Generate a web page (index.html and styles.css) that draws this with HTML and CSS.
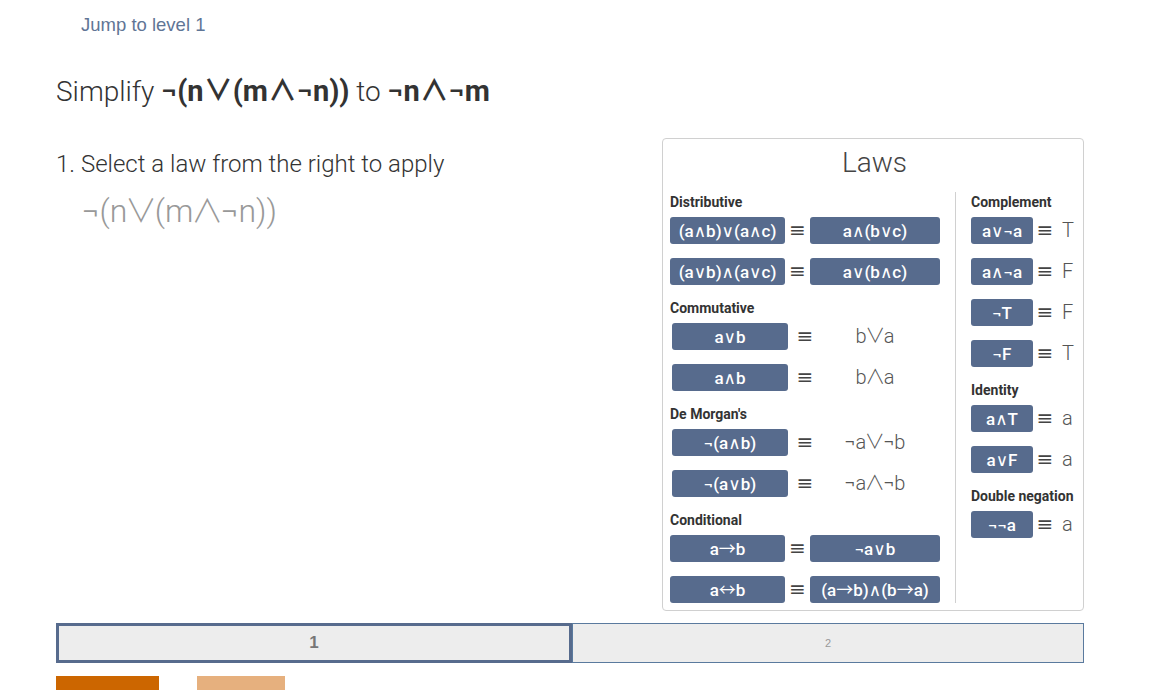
FILE: index.html
```html
<!DOCTYPE html>
<html lang="en">

<head>
    <meta charset="UTF-8">
    <meta name="viewport" content="width=device-width, initial-scale=1.0">
    <title>Simplify - Level 1</title>
    <link rel="stylesheet" href="styles.css">
</head>

<body>
    <div class="page">
        <div class="jump">Jump to level 1</div>

        <h1 class="goal">Simplify <b>¬(n<span class="op">∨</span>(m<span class="op">∧</span>¬n))</b> to <b>¬n<span class="op">∧</span>¬m</b></h1>

        <div class="main">
            <div class="work">
                <div class="step">1. Select a law from the right to apply</div>
                <div class="expr">¬(n<span class="op">∨</span>(m<span class="op">∧</span>¬n))</div>
            </div>

            <div class="laws">
                <div class="laws-title">Laws</div>
                <div class="laws-cols">
                    <div class="col left">
                        <div class="label">Distributive</div>
                        <div class="row wide">
                            <button class="law">(a∧b)∨(a∧c)</button><span class="eq">≡</span><button class="law">a∧(b∨c)</button>
                        </div>
                        <div class="row wide">
                            <button class="law">(a∨b)∧(a∨c)</button><span class="eq">≡</span><button class="law">a∨(b∧c)</button>
                        </div>

                        <div class="label">Commutative</div>
                        <div class="row narrow">
                            <button class="law">a∨b</button><span class="eq">≡</span><span class="res">b<span class="op">∨</span>a</span>
                        </div>
                        <div class="row narrow">
                            <button class="law">a∧b</button><span class="eq">≡</span><span class="res">b<span class="op">∧</span>a</span>
                        </div>

                        <div class="label">De Morgan's</div>
                        <div class="row narrow">
                            <button class="law">¬(a∧b)</button><span class="eq">≡</span><span class="res">¬a<span class="op">∨</span>¬b</span>
                        </div>
                        <div class="row narrow">
                            <button class="law">¬(a∨b)</button><span class="eq">≡</span><span class="res">¬a<span class="op">∧</span>¬b</span>
                        </div>

                        <div class="label">Conditional</div>
                        <div class="row wide">
                            <button class="law">a<span class="op">→</span>b</button><span class="eq">≡</span><button class="law">¬a∨b</button>
                        </div>
                        <div class="row wide">
                            <button class="law">a<span class="op">↔</span>b</button><span class="eq">≡</span><button class="law">(a<span class="op">→</span>b)∧(b<span class="op">→</span>a)</button>
                        </div>
                    </div>

                    <div class="col right">
                        <div class="label">Complement</div>
                        <div class="row small">
                            <button class="law">a∨¬a</button><span class="eq">≡</span><span class="res">T</span>
                        </div>
                        <div class="row small">
                            <button class="law">a∧¬a</button><span class="eq">≡</span><span class="res">F</span>
                        </div>
                        <div class="row small">
                            <button class="law">¬T</button><span class="eq">≡</span><span class="res">F</span>
                        </div>
                        <div class="row small">
                            <button class="law">¬F</button><span class="eq">≡</span><span class="res">T</span>
                        </div>

                        <div class="label">Identity</div>
                        <div class="row small">
                            <button class="law">a∧T</button><span class="eq">≡</span><span class="res">a</span>
                        </div>
                        <div class="row small">
                            <button class="law">a∨F</button><span class="eq">≡</span><span class="res">a</span>
                        </div>

                        <div class="label">Double negation</div>
                        <div class="row small">
                            <button class="law">¬¬a</button><span class="eq">≡</span><span class="res">a</span>
                        </div>
                    </div>
                </div>
            </div>
        </div>

        <div class="tabs">
            <div class="tab active">1</div>
            <div class="tab">2</div>
        </div>

        <div class="bars">
            <div class="bar done"></div>
            <div class="bar todo"></div>
        </div>
    </div>
</body>

</html>
```

FILE: styles.css
```css
* {
    margin: 0;
    padding: 0;
    box-sizing: border-box;
}

body {
    font-family: 'Roboto', 'DejaVu Sans', sans-serif;
    background: #fff;
    color: #333;
    margin: 0;
}

.page {
    margin-left: 56px;
    width: 1028px;
}

/* logic operators drawn with the tall, thin symbol glyphs */
.op {
    font-family: 'Noto Sans CJK SC', 'DejaVu Sans', sans-serif;
    line-height: 0;
}

.expr .op,
.res .op {
    margin: 0 -0.07em;
}

.jump {
    font-family: 'Liberation Sans', Arial, sans-serif;
    font-size: 18.5px;
    line-height: 20px;
    color: #5f7596;
    padding: 15px 0 0 25px;
}

.goal {
    font-size: 28px;
    font-weight: 300;
    line-height: 40px;
    margin-top: 36px;
    color: #333;
}

.goal b {
    font-weight: 700;
    font-size: 29px;
}

.main {
    display: flex;
    margin-top: 26px;
}

.work {
    flex: 1;
}

.step {
    font-size: 24px;
    font-weight: 300;
    line-height: 30px;
    margin-top: 11px;
}

.expr {
    font-size: 32px;
    font-weight: 300;
    color: #999;
    line-height: 40px;
    margin: 12px 0 0 26px;
}

.laws {
    width: 422px;
    border: 1px solid #d0d0d0;
    border-radius: 4px;
    padding: 6px 0 7px 7px;
}

.laws-title {
    font-size: 28px;
    font-weight: 300;
    line-height: 36px;
    text-align: center;
    color: #444;
    padding-right: 4px;
}

.laws-cols {
    display: flex;
    margin-top: 11px;
}

.col.left {
    width: 285px;
}

.col.right {
    flex: 1;
    border-left: 1px solid #d0d0d0;
    padding-left: 15px;
}

.label {
    font-size: 14px;
    font-weight: 700;
    line-height: 20px;
    color: #333;
    margin-top: 13px;
}

.label:first-child {
    margin-top: 0;
}

.row {
    display: grid;
    height: 27px;
    margin-top: 5px;
    align-items: center;
}

.row + .row {
    margin-top: 14px;
}

.row.wide {
    grid-template-columns: 115px 25px 130px;
}

.row.narrow {
    grid-template-columns: 116px 34px 106px;
    margin-left: 2px;
}

.row.small {
    grid-template-columns: 62px 24px auto;
}

.law {
    height: 27px;
    border: none;
    border-radius: 3px;
    background: #576b8d;
    color: #fff;
    font-family: 'Roboto', 'DejaVu Sans', sans-serif;
    font-size: 17px;
    font-weight: 500;
    cursor: pointer;
    white-space: nowrap;
}

.law:hover {
    background: #4a5d7c;
}

.law .op {
    font-weight: 400;
}

.eq {
    text-align: center;
    font-size: 20px;
    line-height: 27px;
    color: #444;
}

.res {
    font-size: 20px;
    font-weight: 300;
    line-height: 27px;
    color: #555;
    text-align: center;
}

.row.small .res {
    text-align: left;
    padding-left: 5px;
}

.tabs {
    display: flex;
    margin-top: 12px;
    height: 40px;
}

.tab {
    flex: 1;
    display: flex;
    justify-content: center;
    align-items: center;
    background: #ededed;
    border: 1px solid #5a7a9e;
    font-family: 'Liberation Sans', Arial, sans-serif;
    font-size: 11px;
    color: #999;
}

.tab.active {
    border: 3px solid #576b8d;
    font-size: 17px;
    font-weight: 700;
    color: #777;
}

.bars {
    display: flex;
    gap: 38px;
    margin-top: 13px;
}

.bar {
    height: 16px;
}

.bar.done {
    width: 103px;
    background: #cc6600;
}

.bar.todo {
    width: 88px;
    background: #e6b07e;
}
```
